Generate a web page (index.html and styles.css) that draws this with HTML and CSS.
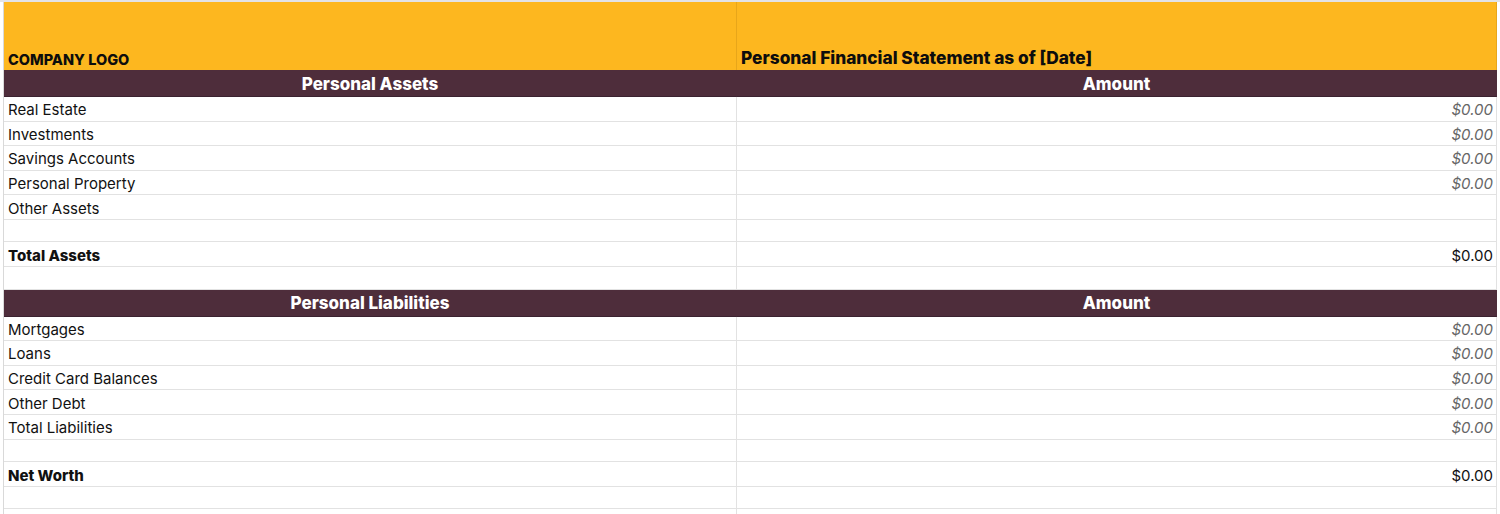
FILE: index.html
```html
<!DOCTYPE html>
<html>
<head>
<meta charset="utf-8">
<link rel="stylesheet" href="styles.css">
</head>
<body>
<div class="sheet">
  <div class="gutter"></div>
  <div class="table">
    <div class="row banner">
      <div class="cell logo">COMPANY LOGO</div>
      <div class="cell title">Personal Financial Statement as of [Date]</div>
    </div>
    <div class="row head">
      <div class="cell">Personal Assets</div>
      <div class="cell">Amount</div>
    </div>
    <div class="row"><div class="cell">Real Estate</div><div class="cell num">$0.00</div></div>
    <div class="row"><div class="cell">Investments</div><div class="cell num">$0.00</div></div>
    <div class="row"><div class="cell">Savings Accounts</div><div class="cell num">$0.00</div></div>
    <div class="row"><div class="cell">Personal Property</div><div class="cell num">$0.00</div></div>
    <div class="row"><div class="cell">Other Assets</div><div class="cell num"></div></div>
    <div class="row empty"><div class="cell"></div><div class="cell"></div></div>
    <div class="row total"><div class="cell">Total Assets</div><div class="cell sum">$0.00</div></div>
    <div class="row empty"><div class="cell"></div><div class="cell"></div></div>
    <div class="row head">
      <div class="cell">Personal Liabilities</div>
      <div class="cell">Amount</div>
    </div>
    <div class="row"><div class="cell">Mortgages</div><div class="cell num">$0.00</div></div>
    <div class="row"><div class="cell">Loans</div><div class="cell num">$0.00</div></div>
    <div class="row"><div class="cell">Credit Card Balances</div><div class="cell num">$0.00</div></div>
    <div class="row"><div class="cell">Other Debt</div><div class="cell num">$0.00</div></div>
    <div class="row"><div class="cell">Total Liabilities</div><div class="cell num">$0.00</div></div>
    <div class="row empty"><div class="cell"></div><div class="cell"></div></div>
    <div class="row total"><div class="cell">Net Worth</div><div class="cell sum">$0.00</div></div>
    <div class="row empty"><div class="cell"></div><div class="cell"></div></div>
    <div class="row"><div class="cell"></div><div class="cell"></div></div>
  </div>
</div>
</body>
</html>
```
FILE: styles.css
```css
html, body {
  margin: 0;
  padding: 0;
  background: #ffffff;
  overflow: hidden;
}
body {
  font-family: Inter, "Open Sans", sans-serif;
  color: #111111;
  height: 514px;
}
.sheet {
  display: flex;
  border-top: 2px solid #e3e3e6;
}
.gutter {
  width: 3px;
  border-right: 1px solid #d9d9d9;
  flex: none;
}
.table {
  display: flex;
  flex-direction: column;
}
.row {
  display: grid;
  grid-template-columns: 733px 760px;
  height: 24.6px;
  box-sizing: border-box;
}
.cell {
  border-right: 1px solid #e2e2e2;
  border-bottom: 1px solid #e2e2e2;
  box-sizing: border-box;
  font-size: 15px;
  padding: 2px 4px 0;
  display: flex;
  align-items: center;
  white-space: nowrap;
  overflow: hidden;
}
.row.empty {
  height: 22.5px;
}
.banner {
  height: 68px;
  background: #fdb71f;
}
.banner .cell {
  align-items: flex-end;
  border-bottom: none;
  border-right-color: #e8a61a;
  font-weight: 800;
  color: #0d0d0d;
}
.banner .logo {
  font-size: 14.5px;
  padding-bottom: 2px;
}
.banner .title {
  font-size: 17.3px;
  padding-bottom: 2px;
}
.head {
  height: 27px;
  background: #4e2d3b;
}
.head .cell {
  justify-content: center;
  color: #ffffff;
  font-weight: 800;
  font-size: 17px;
  padding-top: 1px;
  border-right-color: #4e2d3b;
  border-bottom: 1px solid #3b2230;
}
.num {
  justify-content: flex-end;
  font-style: italic;
  color: #666666;
  padding-right: 3px;
}
.sum {
  justify-content: flex-end;
  padding-right: 3px;
}
.total .cell {
  padding-top: 3px;
}
.total .cell:first-child {
  font-weight: 800;
}
```
